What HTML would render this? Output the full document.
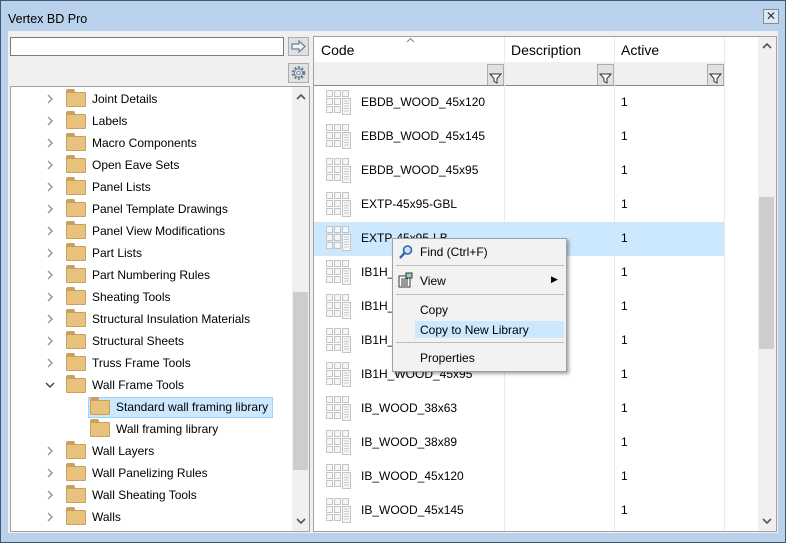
<html><head><style>
*{margin:0;padding:0;box-sizing:border-box}
body{width:786px;height:543px;background:#b9d1ea;font-family:"Liberation Sans",sans-serif;font-size:12px;color:#000;position:relative;overflow:hidden}
.abs{position:absolute}
.frame{left:0;top:0;width:786px;height:543px;border:1px solid #3c5a78;background:#b9d1ea}
.title{left:8px;top:12px;font-size:12.5px}
.close{left:763px;top:9px;width:16px;height:15px;border:1px solid #7f8fa0;background:#dce8f4;font-size:12px;line-height:13px;text-align:center;color:#333}
.body{left:8px;top:31px;width:770px;height:502px;background:#f0f0f0}
.tree{left:10px;top:86px;width:300px;height:446px;background:#fff;border:1px solid #a0a0a0}
.fold{position:absolute;width:20px;height:15px;background:#e8c27c;border:1px solid #c9a15a;border-radius:1px}
.fold:before{content:"";position:absolute;left:-1px;top:-4px;width:9px;height:4px;background:#c9a15a;border-radius:2px 2px 0 0}
.grid{left:313px;top:36px;width:464px;height:496px;background:#fff;border:1px solid #a0a0a0}
.cell{position:absolute;font-size:12px}
.filt{position:absolute;width:17px;height:21px;background:#e1e1e1;border:1px solid #adadad;border-bottom:none}
.menu{left:392px;top:238px;width:175px;height:134px;background:#f2f2f2;border:1px solid #a0a0a0;box-shadow:2px 2px 3px rgba(0,0,0,.35)}
.mi{position:absolute;left:27px;font-size:12px}
.sep{position:absolute;left:3px;width:168px;height:1px;background:#bdbdbd}
</style></head><body>
<div class="abs frame"></div>
<div class="abs title">Vertex BD Pro</div>
<div class="abs close">✕</div>
<div class="abs body"></div>
<div class="abs" style="left:10px;top:37px;width:274px;height:19px;background:#fff;border:1px solid #7a7a7a"></div>
<div class="abs" style="left:288px;top:37px;width:21px;height:19px;border:1px solid #adadad;background:#e1e1e1"><svg width="19" height="17"><path d="M3 6h7V3l6 5.5-6 5.5v-3H3z" fill="#f4f6f8" stroke="#6a7f92" stroke-width="1.2"/></svg></div>
<div class="abs" style="left:288px;top:63px;width:21px;height:20px;border:1px solid #adadad;background:#e1e1e1"><svg width="19" height="18"><circle cx="9.5" cy="9" r="5.5" fill="none" stroke="#6a7f92" stroke-width="2.4" stroke-dasharray="2 1.6"/><circle cx="9.5" cy="9" r="4" fill="#f4f6f8" stroke="#6a7f92"/><circle cx="9.5" cy="9" r="1.8" fill="none" stroke="#6a7f92"/></svg></div>
<div class="abs tree">
<div class="abs" style="left:281px;top:0;width:17px;height:444px;background:#f0f0f0"></div>
<div class="abs" style="left:282px;top:205px;width:15px;height:178px;background:#cdcdcd"></div>
<svg class="abs" style="left:285px;top:6px" width="10" height="8"><path d="M1 6l4-4 4 4" fill="none" stroke="#555" stroke-width="1.6"/></svg>
<svg class="abs" style="left:285px;top:430px" width="10" height="8"><path d="M1 2l4 4 4-4" fill="none" stroke="#555" stroke-width="1.6"/></svg>
</div>
<div id="tree"></div>
<div class="abs grid">
<div class="abs" style="left:0;top:25px;width:411px;height:24px;background:#f0f0f0;border-bottom:1px solid #888"></div>
<div class="abs" style="left:190px;top:0;width:1px;height:494px;background:#e3ecf7"></div>
<div class="abs" style="left:300px;top:0;width:1px;height:494px;background:#e3ecf7"></div>
<div class="abs" style="left:410px;top:0;width:1px;height:494px;background:#e3ecf7"></div>
<div class="abs" style="left:0;top:185px;width:410px;height:34px;background:#cce8ff"></div>
<div class="cell" style="left:7px;top:5px;font-size:14px">Code</div>
<svg class="abs" style="left:92px;top:0px" width="9" height="6"><path d="M1 5l3.5-3.5L8 5" fill="none" stroke="#888"/></svg>
<div class="cell" style="left:197px;top:5px;font-size:14px">Description</div>
<div class="cell" style="left:307px;top:5px;font-size:14px">Active</div>
<div id="filts"></div>
<div class="abs" style="left:444px;top:0;width:18px;height:494px;background:#f0f0f0"></div>
<div class="abs" style="left:445px;top:160px;width:15px;height:152px;background:#cdcdcd"></div>
<svg class="abs" style="left:448px;top:5px" width="10" height="8"><path d="M1 6l4-4 4 4" fill="none" stroke="#555" stroke-width="1.6"/></svg>
<svg class="abs" style="left:448px;top:480px" width="10" height="8"><path d="M1 2l4 4 4-4" fill="none" stroke="#555" stroke-width="1.6"/></svg>
</div>
<div id="rows"></div>
<div class="abs menu">
<svg class="abs" style="left:5px;top:5px" width="16" height="16"><circle cx="9.5" cy="6" r="4" fill="#cfe4f8" stroke="#2a64b0" stroke-width="1.6"/><path d="M6.5 9L2 14" stroke="#2a64b0" stroke-width="2.4"/></svg>
<div class="mi" style="top:6px">Find (Ctrl+F)</div>
<div class="sep" style="top:26px"></div>
<svg class="abs" style="left:5px;top:33px" width="16" height="16"><rect x="1" y="4" width="11" height="11" fill="#fff" stroke="#333"/><path d="M3 7h7M3 9h7M3 11h7M3 13h7" stroke="#333"/><rect x="8" y="1" width="6" height="5" fill="#9cc" stroke="#333"/></svg>
<div class="mi" style="top:35px">View</div>
<div class="abs" style="left:158px;top:35px;font-size:9px">&#9654;</div>
<div class="sep" style="top:55px"></div>
<div class="mi" style="top:64px">Copy</div>
<div class="abs" style="left:22px;top:82px;width:149px;height:17px;background:#cce8ff"></div>
<div class="mi" style="top:84px">Copy to New Library</div>
<div class="sep" style="top:103px"></div>
<div class="mi" style="top:112px">Properties</div>
</div>
<script>
var f="";[173,283,393].forEach(function(x){f+='<div class="filt" style="left:'+x+'px;top:27px"><svg width="15" height="20"><path d="M2 9h11l-4 4.5v4.5l-3-1.5v-3z" fill="#fff" stroke="#333"/></svg></div>';});
document.getElementById("filts").innerHTML=f;
var t=["Joint Details","Labels","Macro Components","Open Eave Sets","Panel Lists","Panel Template Drawings","Panel View Modifications","Part Lists","Part Numbering Rules","Sheating Tools","Structural Insulation Materials","Structural Sheets","Truss Frame Tools","Wall Frame Tools","Standard wall framing library","Wall framing library","Wall Layers","Wall Panelizing Rules","Wall Sheating Tools","Walls"];
var h="";t.forEach(function(s,i){var y=88+i*22;var sub=(i==14||i==15);var fx=sub?90:66;
if(i==14)h+='<div class="abs" style="left:88px;top:'+(y+1)+'px;width:185px;height:21px;background:#cce8ff;border:1px solid #99d1ff"></div>';
if(!sub)h+='<svg class="abs" style="left:45px;top:'+(y+6)+'px" width="10" height="10">'+(i==13?'<path d="M1 3l4 4 4-4" fill="none" stroke="#444" stroke-width="1.5"/>':'<path d="M3 1l4 4-4 4" fill="none" stroke="#999" stroke-width="1.5"/>')+'</svg>';
h+='<div class="fold abs" style="left:'+fx+'px;top:'+(y+4)+'px"></div><div class="abs" style="left:'+(fx+26)+'px;top:'+(y+4)+'px;font-size:12px">'+s+'</div>';});
document.getElementById("tree").innerHTML=h;
var c=["EBDB_WOOD_45x120","EBDB_WOOD_45x145","EBDB_WOOD_45x95","EXTP-45x95-GBL","EXTP-45x95-LB","IB1H_","IB1H_","IB1H_","IB1H_WOOD_45x95","IB_WOOD_38x63","IB_WOOD_38x89","IB_WOOD_45x120","IB_WOOD_45x145"];
var r="";c.forEach(function(s,i){var y=89+i*34;
r+='<svg class="abs" style="left:325px;top:'+y+'px" width="28" height="28" fill="#f6f6f6" stroke="#c4c4c4"><rect x="1.5" y="1.5" width="6" height="6"/><rect x="9.5" y="1.5" width="6" height="6"/><rect x="17.5" y="1.5" width="6" height="6"/><rect x="1.5" y="9.5" width="6" height="6"/><rect x="9.5" y="9.5" width="6" height="6"/><rect x="1.5" y="17.5" width="6" height="6"/><rect x="9.5" y="17.5" width="6" height="6"/><rect x="17.5" y="9.5" width="8" height="16"/><path d="M19 12h5M19 14.5h5M19 17h5M19 19.5h5M19 22h5" stroke="#ccc"/></svg>';
r+='<div class="abs" style="left:361px;top:'+(y+6)+'px">'+s+'</div><div class="abs" style="left:621px;top:'+(y+6)+'px">1</div>';});
document.getElementById("rows").innerHTML=r;
</script>
</body></html>
